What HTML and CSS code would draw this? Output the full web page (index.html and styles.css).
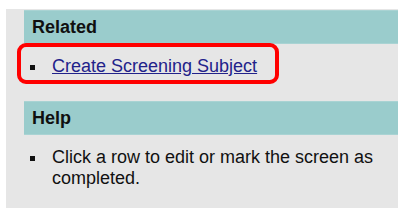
FILE: index.html
```html
<!DOCTYPE html>
<html>
<head>
<meta charset="utf-8">
<link rel="stylesheet" href="styles.css">
</head>
<body>
<div class="panel">
  <section class="block">
    <h2 class="block-title">Related</h2>
    <ul class="items related">
      <li class="item"><a class="link" href="#">Create Screening Subject</a><span class="callout"></span></li>
    </ul>
  </section>
  <section class="block">
    <h2 class="block-title">Help</h2>
    <ul class="items help">
      <li class="item">Click a row to edit or mark the screen as completed.</li>
    </ul>
  </section>
</div>
</body>
</html>
```
FILE: styles.css
```css
html, body {
  margin: 0;
  padding: 0;
  background: #ffffff;
}
body {
  font-family: "Liberation Sans", Arial, sans-serif;
  font-size: 18px;
  color: #111111;
}
.panel {
  margin: 9px 0 0 6px;
  width: 392px;
  height: 199px;
  background: #e6e6e6;
  padding-top: 1px;
  box-sizing: border-box;
}
.block-title {
  margin: 0 0 0 18px;
  height: 34px;
  box-sizing: border-box;
  background: #9acccc;
  border-top: 1px solid #a9d3d3;
  border-bottom: 1px solid #a9d3d3;
  font-size: 18px;
  font-weight: bold;
  line-height: 32px;
  padding-left: 8px;
  color: #101010;
}
.items {
  list-style: none;
  margin: 0;
  padding: 0;
}
.related {
  height: 57px;
  padding-top: 12px;
  box-sizing: border-box;
}
.help {
  padding-top: 12px;
}
.item {
  position: relative;
  padding-left: 46px;
  padding-right: 12px;
  line-height: 21px;
}
.item::before {
  content: "";
  position: absolute;
  left: 24px;
  top: 9px;
  width: 5px;
  height: 5px;
  background: #111111;
}
.link {
  color: #22228a;
  text-decoration: underline;
}
.callout {
  position: absolute;
  left: 11px;
  top: -13px;
  width: 262px;
  height: 41px;
  border: 4px solid #ff0000;
  border-radius: 9px;
  box-sizing: border-box;
  pointer-events: none;
}
```
